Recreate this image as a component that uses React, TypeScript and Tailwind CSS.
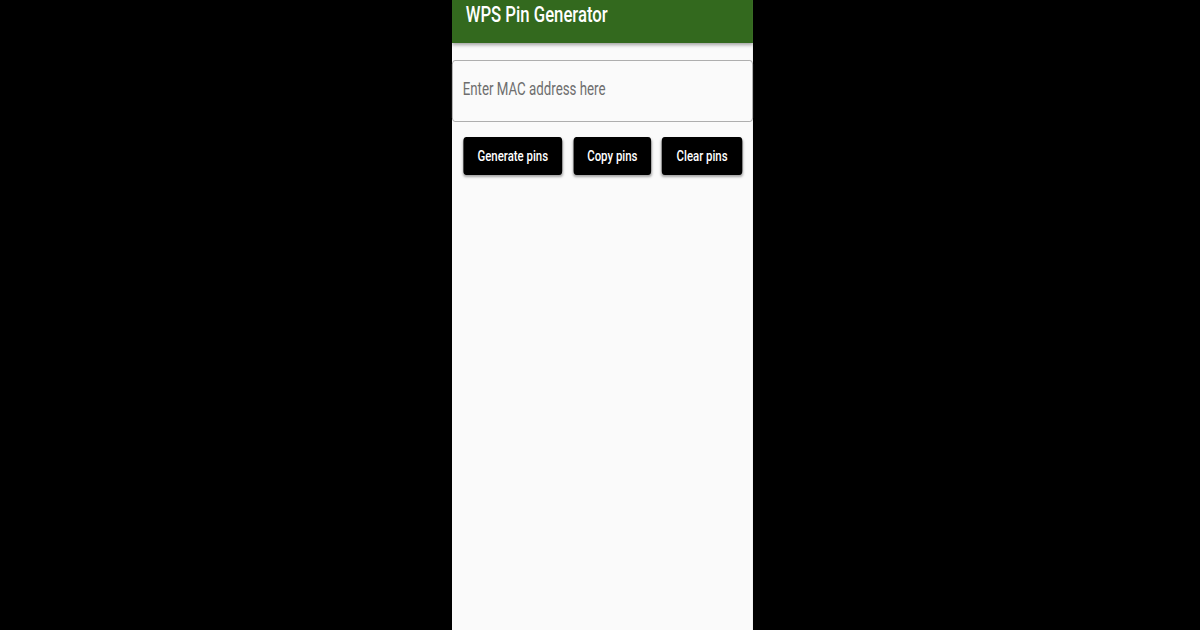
export default function App() {
  return (
    <div className="flex h-[630px] w-[1200px] overflow-hidden bg-black pl-[452px] font-['Roboto',sans-serif]">
      {/* the phone capture is squeezed horizontally, so lay out wide and scale */}
      <div className="flex h-full w-[396px] shrink-0 origin-left scale-x-[0.76] flex-col bg-[#fafafa]">
        <header className="flex h-[43px] items-center bg-[#33691e] pb-[14px] pl-[18px] shadow-[0_2px_4px_rgba(0,0,0,0.35)]">
          <h1 className="text-[22px] font-medium leading-none text-white">
            WPS Pin Generator
          </h1>
        </header>

        <div className="mt-[17px] flex h-[62px] items-center rounded-[4px] border border-[#a3a3a3] bg-[#fafafa] px-[13px] pb-[3px]">
          <span className="text-[17.5px] leading-none text-[#6e6e6e]">
            Enter MAC address here
          </span>
        </div>

        <div className="mt-[15px] flex gap-[14.5px] px-[14.5px]">
          <button className="h-[38px] w-[131.5px] rounded-[4px] bg-black text-[15px] font-medium text-white shadow-[0_2px_3px_rgba(0,0,0,0.35)]">
            Generate pins
          </button>
          <button className="h-[38px] w-[102.5px] rounded-[4px] bg-black text-[15px] font-medium text-white shadow-[0_2px_3px_rgba(0,0,0,0.35)]">
            Copy pins
          </button>
          <button className="h-[38px] w-[105.5px] rounded-[4px] bg-black text-[15px] font-medium text-white shadow-[0_2px_3px_rgba(0,0,0,0.35)]">
            Clear pins
          </button>
        </div>
      </div>
    </div>
  );
}
